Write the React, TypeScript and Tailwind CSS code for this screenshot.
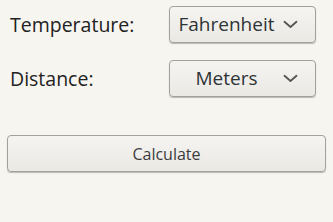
import React from 'react';

function Chevron() {
  return (
    <svg width="15" height="9" viewBox="0 0 15 9" className="shrink-0">
      <path d="M1.5 1.8 L7.5 7 L13.5 1.8" fill="none" stroke="#555" strokeWidth="1.8" strokeLinecap="round" strokeLinejoin="round" />
    </svg>
  );
}

function Select({ value }: { value: string }) {
  return (
    <button
      type="button"
      className="flex h-[37px] w-[147px] items-center rounded-[4px] border border-[#a3a19d] bg-gradient-to-b from-[#f5f4f1] to-[#ebe9e4] pr-[17px] shadow-[0_1px_1px_rgba(0,0,0,0.25)]"
    >
      <span className="flex-1 text-center text-[19px] leading-none text-[#2e3436]">{value}</span>
      <Chevron />
    </button>
  );
}

export default function App() {
  return (
    <div className="h-[222px] w-[333px] bg-[#f7f5f0] px-[7px] pt-[6px] font-['Open_Sans',sans-serif]">
      <div className="grid gap-[17px]">
        <div className="flex items-center">
          <span className="w-[162px] pl-[3px] text-[19.5px] text-[#222]">Temperature:</span>
          <Select value="Fahrenheit" />
        </div>
        <div className="flex items-center">
          <span className="w-[162px] pl-[3px] text-[19.5px] text-[#222]">Distance:</span>
          <Select value="Meters" />
        </div>
      </div>
      <button
        type="button"
        className="mt-[38px] flex h-[37px] w-[319px] items-center justify-center rounded-[4px] border border-[#a3a19d] bg-gradient-to-b from-[#f5f4f1] to-[#ebe9e4] text-[16px] text-[#3c3c3c] shadow-[0_1px_1px_rgba(0,0,0,0.25)]"
      >
        Calculate
      </button>
    </div>
  );
}
